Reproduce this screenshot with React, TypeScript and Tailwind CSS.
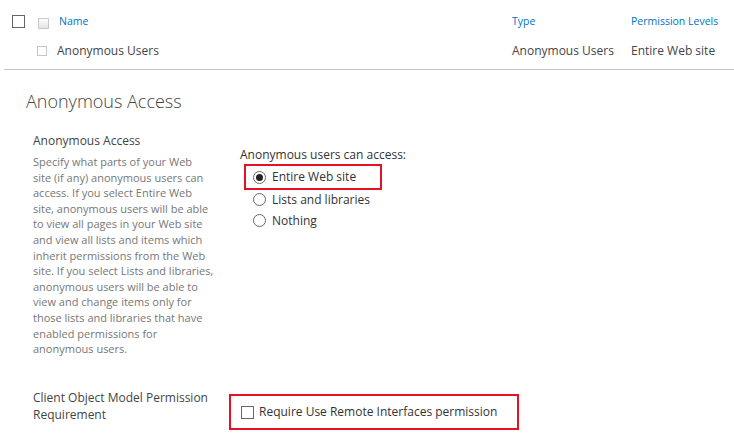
const font = { fontFamily: '"Open Sans", "Noto Sans", sans-serif' }

function Radio({ checked }: { checked?: boolean }) {
    return (
        <span className="w-[13px] h-[13px] rounded-full border border-[#666] flex items-center justify-center bg-white shrink-0">
            {checked && <span className="w-[7px] h-[7px] rounded-full bg-[#222]" />}
        </span>
    )
}

const description = [
    "Specify what parts of your Web",
    "site (if any) anonymous users can",
    "access. If you select Entire Web",
    "site, anonymous users will be able",
    "to view all pages in your Web site",
    "and view all lists and items which",
    "inherit permissions from the Web",
    "site. If you select Lists and libraries,",
    "anonymous users will be able to",
    "view and change items only for",
    "those lists and libraries that have",
    "enabled permissions for",
    "anonymous users.",
]

export default function App() {
    return (
        <div className="w-[734px] h-[442px] bg-white overflow-hidden text-[#444]" style={font}>
            <div className="pt-[15px]">
                <div className="flex items-center h-[13px]">
                    <span className="ml-[12px] w-[13px] h-[13px] border border-[#666] bg-white shrink-0" />
                    <span className="ml-[13px] w-[11px] h-[11px] mt-[3px] border border-[#c8c8c8] bg-gradient-to-b from-[#fdfdfd] to-[#e4e4e4] shrink-0" />
                    <span className="ml-[10px] flex-1 text-[10.5px] text-[#0072c6] mt-[1px]">Name</span>
                    <span className="w-[119px] text-[10.5px] text-[#0072c6] mt-[1px]">Type</span>
                    <span className="w-[103px] text-[10.5px] text-[#0072c6] mt-[1px]">Permission Levels</span>
                </div>
                <div className="flex items-center h-[22px] mt-[12px] text-[12px]">
                    <span className="ml-[37px] w-[10px] h-[10px] border border-[#c6c6c6] bg-white shrink-0" />
                    <span className="ml-[10px] flex-1">Anonymous Users</span>
                    <span className="w-[119px]">Anonymous Users</span>
                    <span className="w-[103px]">Entire Web site</span>
                </div>
            </div>
            <div className="ml-[4px] mt-[7px] border-t border-[#c6c6c6]" />

            <div className="pl-[26px] pt-[19px]">
                <h2 className="text-[18px] leading-[24px] font-light text-[#444]">Anonymous Access</h2>

                <div className="flex mt-[19px]">
                    <div className="w-[214px] pl-[7px]">
                        <div className="text-[12px] leading-[18px]">Anonymous Access</div>
                        <div className="mt-[4px] text-[11px] leading-[15.6px] text-[#777]">
                            {description.map((line) => (
                                <div key={line} className="whitespace-nowrap">{line}</div>
                            ))}
                        </div>
                    </div>
                    <div className="pt-[14px]">
                        <div className="text-[12px] leading-[18px] text-[#333]">Anonymous users can access:</div>
                        <div className="ml-[4px] w-[138px] h-[26px] border-2 border-[#e81123] flex items-center gap-[6px] pl-[7px]">
                            <Radio checked />
                            <span className="text-[12px] text-[#333]">Entire Web site</span>
                        </div>
                        <div className="flex items-center gap-[6px] pl-[13px] h-[21px] mt-[-1px]">
                            <Radio />
                            <span className="text-[12px] text-[#333]">Lists and libraries</span>
                        </div>
                        <div className="flex items-center gap-[6px] pl-[13px] h-[21px]">
                            <Radio />
                            <span className="text-[12px] text-[#333]">Nothing</span>
                        </div>
                    </div>
                </div>

                <div className="flex items-start mt-[32px]">
                    <div className="w-[203px] pl-[7px] text-[12px] leading-[17px]">
                        Client Object Model Permission<br />Requirement
                    </div>
                    <div className="mt-[5px] w-[290px] h-[36px] border-2 border-[#e81123] flex items-center gap-[5px] pl-[10px] pt-[1px]">
                        <span className="w-[13px] h-[13px] border border-[#666] bg-white shrink-0" />
                        <span className="text-[12px] text-[#333] whitespace-nowrap">Require Use Remote Interfaces permission</span>
                    </div>
                </div>
            </div>
        </div>
    )
}
